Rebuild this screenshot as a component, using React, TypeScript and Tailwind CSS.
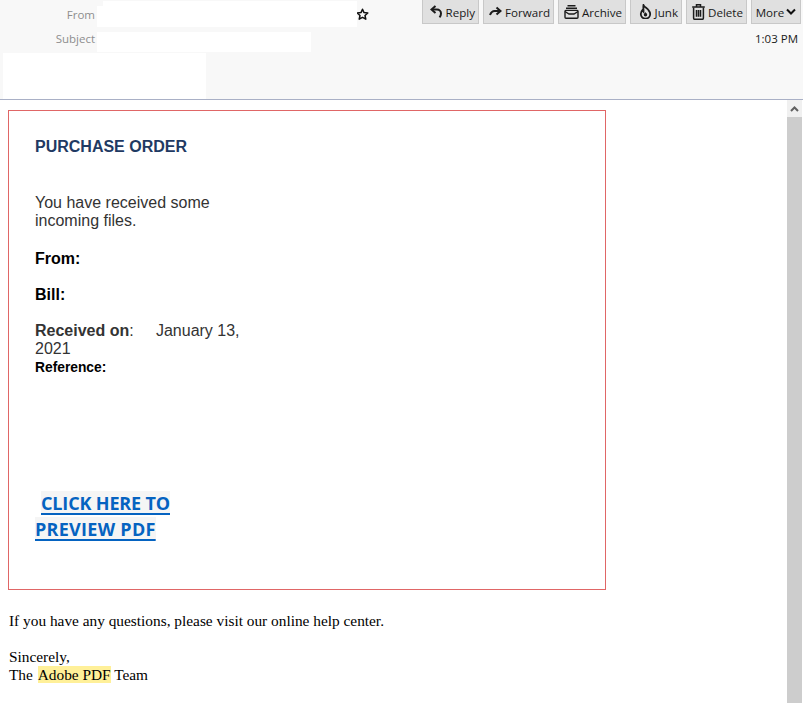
import React from 'react';

const uiFont = 'font-["Open_Sans",sans-serif]';

// thunderbird toolbar icons
const ReplyIcon = () => (
    <svg width="13" height="13" viewBox="0 0 13 13" fill="none" stroke="#1c1c1c" strokeWidth="2">
        <path d="M5.500 1 1.500 4.500 5.500 8" />
        <path d="M2 4.500h5a4 4 0 0 1 4 4c0 1.600-.6 2.800-1.500 3.800" />
    </svg>
);

const ForwardIcon = () => (
    <svg width="13" height="13" viewBox="0 0 13 13" fill="none" stroke="#1c1c1c" strokeWidth="2">
        <path d="M7.500 2.500 11.500 6 7.500 9.500" />
        <path d="M11 6H5.500C3.300 6 2 7.500 1 10" />
    </svg>
);

const ArchiveIcon = () => (
    <svg width="15" height="14" viewBox="0 0 15 14" fill="none" stroke="#1c1c1c" strokeWidth="1.400">
        <path d="M3.500.8h8M2 3.200h11" />
        <path d="M1 6.200a.8.800 0 0 1 .8-.8h11.400a.8.800 0 0 1 .8.800v6a1 1 0 0 1-1 1H2a1 1 0 0 1-1-1z" />
        <path d="M1 6.500 5 9h5l4-2.500" />
    </svg>
);

const JunkIcon = () => (
    <svg width="13" height="15" viewBox="0 0 13 15" fill="none" stroke="#1c1c1c" strokeWidth="1.800">
        <path d="M4.500 1c1 2.200 3.200 2.800 4.800 4.800 1.100 1.300 1.900 2.600 1.900 4.200a4.700 4.700 0 0 1-9.400 0c0-1.700.6-3 1.800-4.200.1 1 .3 1.600.9 2.100C4.700 5.500 4 3 4.500 1Z" />
        <path d="M6.500 8c.3 1 1.700 1.400 1.700 2.700a1.700 1.700 0 0 1-3.400 0C4.800 9.500 6 9 6.500 8Z" fill="#1c1c1c" stroke="none" />
    </svg>
);

const DeleteIcon = () => (
    <svg width="13" height="16" viewBox="0 0 13 16" fill="none" stroke="#1c1c1c" strokeWidth="1.500">
        <path d="M4.500 2.500V.8h4v1.700M.2 3h12.600" />
        <path d="M1.600 3.500v10.400c0 .9.500 1.400 1.300 1.400h7.200c.8 0 1.300-.5 1.300-1.400V3.500" />
        <path d="M4.500 6v6.800M6.500 6v6.800M8.500 6v6.800" />
    </svg>
);

const StarIcon = () => (
    <svg width="13" height="13" viewBox="0 0 13 13" fill="none" stroke="#111" strokeWidth="1.500" strokeLinejoin="round">
        <path d="M6.500 1.200 8 4.600l3.800.4-2.800 2.500.8 3.700-3.300-1.900-3.300 1.900.8-3.700L1.200 5l3.800-.4Z" />
    </svg>
);

const ToolbarButton = ({ icon, label, className }: { icon: React.ReactNode; label: string; className: string }) => (
    <div className={`h-6 flex items-center justify-end gap-[3px] pr-[3px] bg-[#e0e0e0] border border-[#c8c8c8] border-t-0 text-[11.6px] text-[#1a1a1a] ${className}`}>
        {icon}
        <span className="pt-[2px]">{label}</span>
    </div>
);

const App = () => {
    return (
        <div className="w-[803px] h-[703px] overflow-hidden bg-white flex flex-col">
            {/* Message header */}
            <div className={`h-[100px] shrink-0 bg-[#f8f8f8] border-b border-[#a9b0c6] flex ${uiFont}`}>
                <div className="w-[422px] shrink-0 flex flex-col">
                    <div className="flex pt-px h-[32px]">
                        <span className="w-[95px] text-right text-[11.5px] leading-[28px] text-[#8e8e8e]">From</span>
                        <div className="relative ml-[2px] mt-[5px] w-[6px] h-[21px] bg-white">
                            <div className="absolute left-[6px] top-[-5px] w-[254px] h-[26px] bg-white"></div>
                        </div>
                        <div className="ml-[253px] mt-[7px]"><StarIcon /></div>
                    </div>
                    <div className="flex h-[21px]">
                        <span className="w-[95px] text-right text-[11.5px] leading-[14px] text-[#8e8e8e]">Subject</span>
                        <div className="ml-[2px] w-[214px] h-[20px] bg-white"></div>
                    </div>
                    <div className="ml-[3px] w-[203px] h-[46px] bg-white"></div>
                </div>
                <div className="flex-1 flex flex-col">
                    <div className="flex gap-[4px]">
                        <ToolbarButton icon={<ReplyIcon />} label="Reply" className="w-[57px]" />
                        <ToolbarButton icon={<ForwardIcon />} label="Forward" className="w-[71px]" />
                        <ToolbarButton icon={<ArchiveIcon />} label="Archive" className="w-[68px]" />
                        <ToolbarButton icon={<JunkIcon />} label="Junk" className="w-[52px]" />
                        <ToolbarButton icon={<DeleteIcon />} label="Delete" className="w-[61px]" />
                        <div className="w-[50px] h-6 flex items-center justify-center gap-[2px] bg-[#e0e0e0] border border-[#c8c8c8] border-t-0 text-[11.6px] text-[#1a1a1a]">
                            <span className="pt-[2px]">More</span>
                            <svg width="10" height="7" viewBox="0 0 10 7" fill="none" stroke="#111" strokeWidth="2">
                                <path d="M1 1.500 5 5.500 9 1.500" />
                            </svg>
                        </div>
                    </div>
                    <div className="pr-[5px] pt-[7px] text-right text-[11.5px] leading-[16px] text-[#1a1a1a]">1:03 PM</div>
                </div>
            </div>

            {/* Message body */}
            <div className="flex-1 flex min-h-0">
                <div className="flex-1 pl-[8px] pt-[10px]">
                    <div className='w-[598px] h-[480px] border border-[#e06666] pl-[26px] pt-[27px] font-["Liberation_Sans",sans-serif] text-[16px] leading-[18px] text-[#333333]'>
                        <h1 className="font-bold text-[#1f3a63]">PURCHASE ORDER</h1>
                        <p className="mt-[38px]">You have received some<br />incoming files.</p>
                        <p className="mt-[20px] font-bold text-black">From:</p>
                        <p className="mt-[18px] font-bold text-black">Bill:</p>
                        <p className="mt-[18px]"><b>Received on</b>:&nbsp;&nbsp;&nbsp;&nbsp; January 13,<br />2021</p>
                        <p className="mt-[2px] text-[13.800px] leading-[15px] font-bold text-black">Reference:</p>
                        <a className={`block mt-[115px] w-fit text-[18px] leading-[26px] font-bold text-[#0563c1] underline decoration-2 underline-offset-[3px] ${uiFont}`}>
                            <span className="ml-[6px] bg-[#f5f5f5] tracking-[-0.15px]">CLICK HERE TO</span><br />
                            <span className="bg-[#f5f5f5] tracking-[0.28px]">PREVIEW PDF</span>
                        </a>
                    </div>
                    <div className='pl-px pt-[22px] font-["Liberation_Serif",serif] text-[15.350px] leading-[18px] text-black'>
                        <p>If you have any questions, please visit our online help center.</p>
                        <p className="mt-[18px]">Sincerely,</p>
                        <p>The <span className="ml-px bg-[#fff099]">Adobe PDF</span> Team</p>
                    </div>
                </div>

                {/* Scrollbar */}
                <div className="w-[15px] mr-px shrink-0 flex flex-col">
                    <div className="h-[17px] bg-[#f0f0f0] flex items-center justify-center">
                        <svg width="9" height="6" viewBox="0 0 9 6" fill="none" stroke="#606060" strokeWidth="2">
                            <path d="M1 5 4.500 1.500 8 5" />
                        </svg>
                    </div>
                    <div className="flex-1 bg-[#cdcdcd]"></div>
                </div>
            </div>
        </div>
    );
};

export default App;
